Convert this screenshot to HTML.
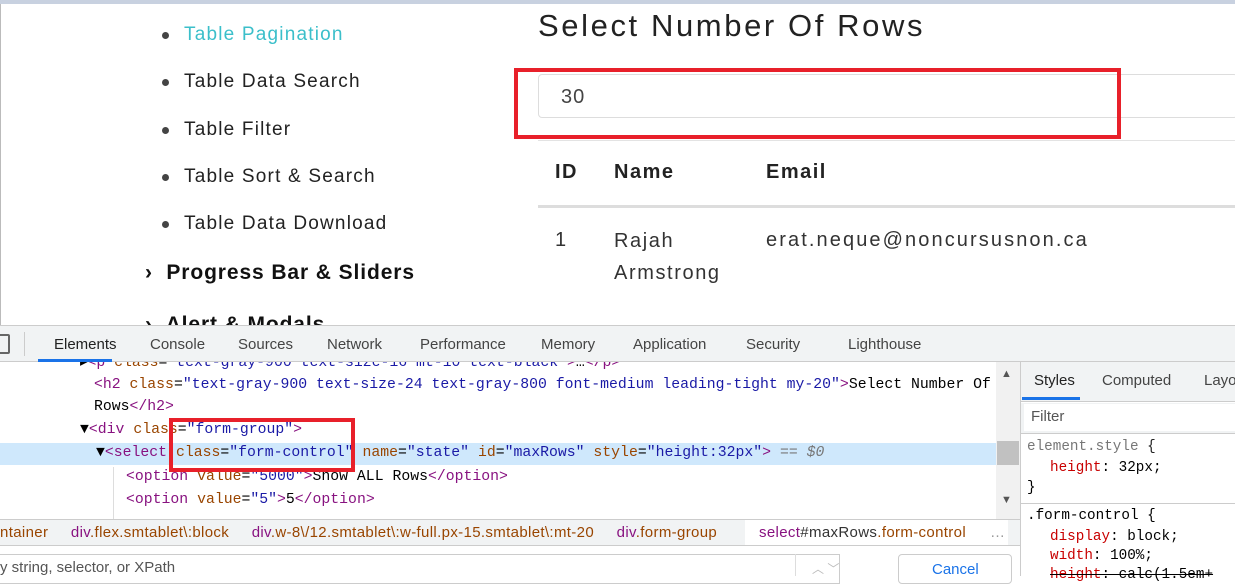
<!DOCTYPE html>
<html><head><style>
*{margin:0;padding:0;box-sizing:border-box}
body{width:1235px;height:576px;overflow:hidden;background:#fff;font-family:"Liberation Sans",sans-serif;position:relative}
.a{position:absolute;white-space:nowrap}
.m{font-family:"Liberation Mono",monospace;font-size:14.8px}
.tag{color:#881280}.at{color:#994500}.v{color:#1a1aa6}
.li{font-size:19px;color:#222;letter-spacing:1.2px}
.dot{width:7px;height:7px;border-radius:50%;background:#444;position:absolute}
.tab{font-size:15px;color:#444;top:336px}
</style></head><body>
<div class="a" style="left:0;top:0;width:1235px;height:4px;background:#c8d1e0"></div>
<div class="a" style="left:0;top:4px;width:1px;height:322px;background:#bbb"></div>

<div class="dot" style="left:162px;top:32px"></div><div class="a li" style="left:184px;top:24px;color:#3bbfca">Table Pagination</div>
<div class="dot" style="left:162px;top:79px"></div><div class="a li" style="left:184px;top:71px">Table Data Search</div>
<div class="dot" style="left:162px;top:127px"></div><div class="a li" style="left:184px;top:119px">Table Filter</div>
<div class="dot" style="left:162px;top:174px"></div><div class="a li" style="left:184px;top:166px">Table Sort &amp; Search</div>
<div class="dot" style="left:162px;top:221px"></div><div class="a li" style="left:184px;top:213px">Table Data Download</div>
<div class="a" style="left:145px;top:261px;font-size:21px;font-weight:bold;color:#111;letter-spacing:0.9px">›&nbsp; Progress Bar &amp; Sliders</div>
<div class="a" style="left:145px;top:313px;font-size:21px;font-weight:bold;color:#111;letter-spacing:0.9px">›&nbsp; Alert &amp; Modals</div>

<div class="a" style="left:538px;top:8px;font-size:31px;color:#222;letter-spacing:2.6px">Select Number Of Rows</div>
<div class="a" style="left:538px;top:74px;width:700px;height:44px;border:1px solid #ddd;border-radius:4px"></div>
<div class="a" style="left:561px;top:86px;font-size:20px;color:#444;letter-spacing:1px">30</div>
<div class="a" style="left:514px;top:68px;width:607px;height:71px;border:4px solid #e8202a"></div>
<div class="a" style="left:538px;top:140px;width:700px;height:1px;background:#e3e3e3"></div>
<div class="a" style="left:555px;top:161px;font-size:20px;font-weight:bold;color:#222;letter-spacing:1.5px">ID</div>
<div class="a" style="left:614px;top:161px;font-size:20px;font-weight:bold;color:#222;letter-spacing:1.5px">Name</div>
<div class="a" style="left:766px;top:161px;font-size:20px;font-weight:bold;color:#222;letter-spacing:1.5px">Email</div>
<div class="a" style="left:538px;top:205px;width:700px;height:3px;background:#ddd"></div>
<div class="a" style="left:555px;top:229px;font-size:20px;color:#333">1</div>
<div class="a" style="left:614px;top:225px;font-size:20px;color:#333;line-height:32px;letter-spacing:1.6px">Rajah<br>Armstrong</div>
<div class="a" style="left:766px;top:229px;font-size:20px;color:#333;letter-spacing:2.1px">erat.neque@noncursusnon.ca</div>

<!-- devtools -->
<div class="a" style="left:0;top:325px;width:1235px;height:251px;background:#fff;border-top:1px solid #ccc"></div>
<div class="a" style="left:0;top:326px;width:1235px;height:36px;background:#f1f3f4;border-bottom:1px solid #ccc"></div>
<div class="a" style="left:-4px;top:334px;width:14px;height:20px;border:2px solid #666;border-radius:2px"></div>
<div class="a" style="left:24px;top:332px;width:1px;height:24px;background:#ccc"></div>
<div class="a" style="left:38px;top:359px;width:74px;height:3px;background:#1a73e8"></div>
<div class="a tab" style="left:54px;color:#222">Elements</div>
<div class="a tab" style="left:150px">Console</div>
<div class="a tab" style="left:238px">Sources</div>
<div class="a tab" style="left:327px">Network</div>
<div class="a tab" style="left:420px">Performance</div>
<div class="a tab" style="left:541px">Memory</div>
<div class="a tab" style="left:633px">Application</div>
<div class="a tab" style="left:746px">Security</div>
<div class="a tab" style="left:848px">Lighthouse</div>

<div class="a" style="left:0;top:443px;width:996px;height:22px;background:#cfe8fc"></div>
<div class="a" style="left:0;top:362px;width:996px;height:157px;overflow:hidden">
<div class="a m" style="left:80px;top:-9px">▸<span class="tag">&lt;p</span> <span class="at">class</span>="<span class="v">text-gray-900 text-size-16 mt-10 text-black</span>"<span class="tag">&gt;</span>…<span class="tag">&lt;/p&gt;</span></div>
<div class="a m" style="left:94px;top:15px"><span class="tag">&lt;h2</span> <span class="at">class</span>=<span class="v">"text-gray-900 text-size-24 text-gray-800 font-medium leading-tight my-20"</span><span class="tag">&gt;</span>Select Number Of</div>
<div class="a m" style="left:94px;top:37px">Rows<span class="tag">&lt;/h2&gt;</span></div>
<div class="a m" style="left:80px;top:60px">▼<span class="tag">&lt;div</span> <span class="at">class</span>=<span class="v">"form-group"</span><span class="tag">&gt;</span></div>
<div class="a m" style="left:96px;top:83px">▼<span class="tag">&lt;select</span> <span class="at">class</span>=<span class="v">"form-control"</span> <span class="at">name</span>=<span class="v">"state"</span> <span class="at">id</span>=<span class="v">"maxRows"</span> <span class="at">style</span>=<span class="v">"height:32px"</span><span class="tag">&gt;</span> <span style="color:#777">== <i>$0</i></span></div>
<div class="a m" style="left:126px;top:107px"><span class="tag">&lt;option</span> <span class="at">value</span>=<span class="v">"5000"</span><span class="tag">&gt;</span>Show ALL Rows<span class="tag">&lt;/option&gt;</span></div>
<div class="a m" style="left:126px;top:130px"><span class="tag">&lt;option</span> <span class="at">value</span>=<span class="v">"5"</span><span class="tag">&gt;</span>5<span class="tag">&lt;/option&gt;</span></div>
</div>
<div class="a" style="left:113px;top:467px;width:1px;height:53px;background:#ddd"></div>
<div class="a" style="left:169px;top:418px;width:186px;height:54px;border:4px solid #e8202a"></div>
<div class="a" style="left:996px;top:362px;width:24px;height:158px;background:#f1f1f1"></div>
<div class="a" style="left:997px;top:441px;width:22px;height:24px;background:#c1c1c1"></div>
<div class="a" style="left:1001px;top:368px;font-size:11px;color:#555">▲</div>
<div class="a" style="left:1001px;top:494px;font-size:11px;color:#555">▼</div>

<div class="a" style="left:0;top:519px;width:1020px;height:27px;background:#f1f3f4;border-top:1px solid #ccc;border-bottom:1px solid #ccc"></div>
<div class="a" style="left:745px;top:520px;width:263px;height:25px;background:#fff"></div>
<div class="a" style="left:0;top:524px;font-size:15px;color:#994500;letter-spacing:0.35px">ntainer&nbsp;&nbsp;&nbsp;&nbsp; <span style="color:#881280">div</span>.flex.smtablet\:block&nbsp;&nbsp;&nbsp;&nbsp; <span style="color:#881280">div</span>.w-8\/12.smtablet\:w-full.px-15.smtablet\:mt-20&nbsp;&nbsp;&nbsp;&nbsp; <span style="color:#881280">div</span>.form-group</div>
<div class="a" style="left:759px;top:524px;font-size:15px;color:#994500;letter-spacing:0.35px"><span style="color:#881280">select</span><span style="color:#333">#maxRows</span>.form-control</div>
<div class="a" style="left:990px;top:524px;font-size:15px;color:#999">…</div>
<div class="a" style="left:0;top:559px;font-size:15px;color:#555">y string, selector, or XPath</div>
<div class="a" style="left:0;top:554px;width:840px;height:30px;border:1px solid #ccc;border-left:none"></div>
<div class="a" style="left:795px;top:554px;width:1px;height:22px;background:#ddd"></div>
<div class="a" style="left:812px;top:560px;font-size:12px;color:#bbb">︿&nbsp;﹀</div>
<div class="a" style="left:898px;top:554px;width:114px;height:30px;border:1px solid #ccc;border-radius:4px"></div>
<div class="a" style="left:932px;top:561px;font-size:15px;color:#1a73e8">Cancel</div>

<div class="a" style="left:1020px;top:362px;width:1px;height:214px;background:#ccc"></div>
<div class="a" style="left:1021px;top:362px;width:214px;height:40px;background:#f1f3f4;border-bottom:1px solid #ccc"></div>
<div class="a" style="left:1034px;top:372px;font-size:15px;color:#222">Styles</div>
<div class="a" style="left:1022px;top:397px;width:58px;height:3px;background:#1a73e8"></div>
<div class="a" style="left:1102px;top:372px;font-size:15px;color:#444">Computed</div>
<div class="a" style="left:1204px;top:372px;font-size:15px;color:#444">Layo</div>
<div class="a" style="left:1021px;top:403px;width:214px;height:30px;background:#f1f3f4"></div>
<div class="a" style="left:1024px;top:404px;width:211px;height:27px;background:#fff"></div>
<div class="a" style="left:1031px;top:408px;font-size:15px;color:#555">Filter</div>
<div class="a" style="left:1021px;top:433px;width:214px;height:1px;background:#ccc"></div>
<div class="a m" style="left:1027px;top:439px;color:#777;font-size:14.3px">element.style <span style="color:#222">{</span></div>
<div class="a m" style="left:1050px;top:460px;font-size:14.3px"><span style="color:#c80000">height</span>: 32px;</div>
<div class="a m" style="left:1027px;top:480px;font-size:14.3px">}</div>
<div class="a" style="left:1021px;top:503px;width:214px;height:1px;background:#ccc"></div>
<div class="a m" style="left:1027px;top:508px;font-size:14.3px">.form-control {</div>
<div class="a m" style="left:1050px;top:529px;font-size:14.3px"><span style="color:#c80000">display</span>: block;</div>
<div class="a m" style="left:1050px;top:548px;font-size:14.3px"><span style="color:#c80000">width</span>: 100%;</div>
<div class="a m" style="left:1050px;top:567px;font-size:14.3px;text-decoration:line-through"><span style="color:#c80000">height</span>: calc(1.5em+</div>
</body></html>
